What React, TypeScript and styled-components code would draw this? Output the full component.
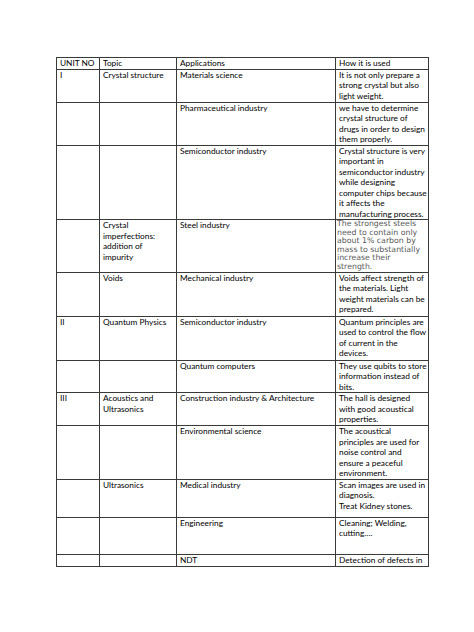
import styled, { createGlobalStyle } from "styled-components";

const GlobalStyle = createGlobalStyle`
  html, body {
    margin: 0;
    padding: 0;
    background: #ffffff;
  }
`;

const Page = styled.div`
  width: 474px;
  height: 632px;
  padding: 57px 0 0 56px;
  box-sizing: border-box;
  background: #ffffff;
  font-family: Lato, "Open Sans", sans-serif;
`;

const Table = styled.table`
  border-collapse: collapse;
  table-layout: fixed;
  width: 372px;
  color: #000;
  font-size: 8.3px;
  line-height: 10.5px;
`;

const Row = styled.tr<{ $h: number }>`
  height: ${(p) => p.$h}px;
`;

const Cell = styled.td`
  border: 1px solid #3a3a3a;
  padding: 0 1px 0 3px;
  vertical-align: top;
  overflow: hidden;
  white-space: pre-line;
`;

const PastedCell = styled(Cell)`
  padding: 0 1px 0 1px;
  font-family: "DejaVu Sans", Verdana, sans-serif;
  font-size: 7.8px;
  line-height: 8.6px;
  color: #595959;
`;

type Item = {
  h: number;
  unit?: string;
  topic?: string;
  app?: string;
  use?: string;
  pasted?: boolean;
};

const rows: Item[] = [
  { h: 11, unit: "UNIT NO", topic: "Topic", app: "Applications", use: "How it is used" },
  {
    h: 33,
    unit: "I",
    topic: "Crystal structure",
    app: "Materials science",
    use: "It is not only prepare a strong crystal but also light weight.",
  },
  {
    h: 43,
    app: "Pharmaceutical industry",
    use: "we have to determine crystal structure of drugs in order to design them properly.",
  },
  {
    h: 74,
    app: "Semiconductor industry",
    use: "Crystal structure is very important in semiconductor industry while designing computer chips because it affects the manufacturing process.",
  },
  {
    h: 52,
    topic: "Crystal\nimperfections:\naddition of\nimpurity",
    app: "Steel industry",
    use: "The strongest steels need to contain only about 1% carbon by mass to substantially increase their strength.",
    pasted: true,
  },
  {
    h: 44,
    topic: "Voids",
    app: "Mechanical industry",
    use: "Voids affect strength of the materials. Light weight materials can be prepared.",
  },
  {
    h: 44,
    unit: "II",
    topic: "Quantum Physics",
    app: "Semiconductor industry",
    use: "Quantum principles are used to control the flow of current in the devices.",
  },
  {
    h: 31,
    app: "Quantum computers",
    use: "They use qubits to store information instead of bits.",
  },
  {
    h: 33,
    unit: "III",
    topic: "Acoustics and Ultrasonics",
    app: "Construction industry & Architecture",
    use: "The hall is designed with good acoustical properties.",
  },
  {
    h: 52,
    app: "Environmental science",
    use: "The acoustical principles are used for noise control and ensure a peaceful environment.",
  },
  {
    h: 38,
    topic: "Ultrasonics",
    app: "Medical industry",
    use: "Scan images are used in diagnosis.\nTreat Kidney stones.",
  },
  { h: 37, app: "Engineering", use: "Cleaning; Welding, cutting…." },
  { h: 12, app: "NDT", use: "Detection of defects in" },
];

function App() {
  return (
    <Page>
      <GlobalStyle />
      <Table>
        <colgroup>
          <col style={{ width: 43 }} />
          <col style={{ width: 77 }} />
          <col style={{ width: 159 }} />
          <col style={{ width: 93 }} />
        </colgroup>
        <tbody>
          {rows.map((r, i) => (
            <Row key={i} $h={r.h}>
              <Cell>{r.unit}</Cell>
              <Cell>{r.topic}</Cell>
              <Cell>{r.app}</Cell>
              {r.pasted ? <PastedCell>{r.use}</PastedCell> : <Cell>{r.use}</Cell>}
            </Row>
          ))}
        </tbody>
      </Table>
    </Page>
  );
}

export default App;
